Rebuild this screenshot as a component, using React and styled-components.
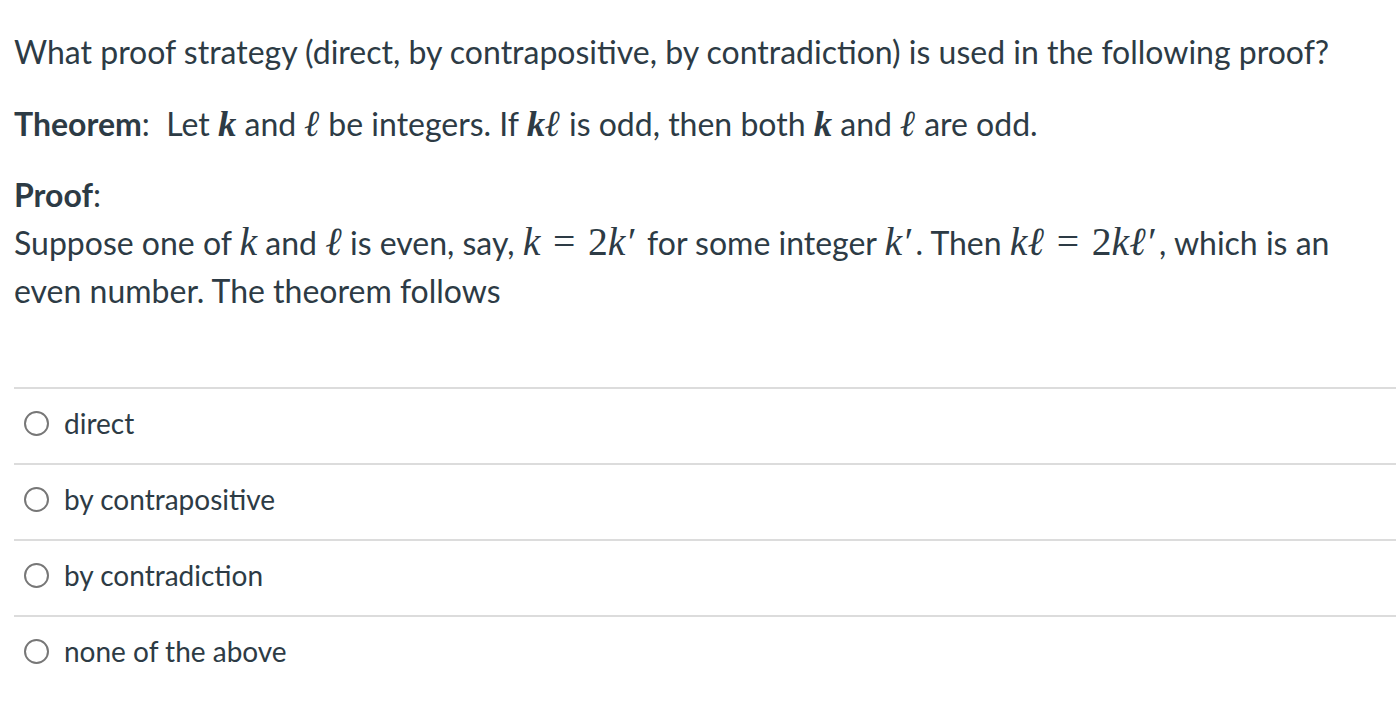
import React from "react";
import styled, { createGlobalStyle } from "styled-components";

const Global = createGlobalStyle`
  html, body { margin: 0; padding: 0; background: #fff; }
  body { font-family: Lato, "Open Sans", sans-serif; color: #2d3b45; }
`;

const Page = styled.div`
  padding: 28px 0 0 14px;
  font-size: 32px;
  line-height: 48px;
`;

const Para = styled.p`
  margin: 0 0 ${(p) => p.$gap || 0}px;
  max-width: 1350px;
`;

const Strong = styled.strong`
  font-weight: 700;
`;

const M = styled.span`
  font-family: "Liberation Serif", "DejaVu Serif", serif;
  font-style: ${(p) => (p.$up ? "normal" : "italic")};
  font-weight: ${(p) => (p.$bold ? 700 : 400)};
  font-size: ${(p) => p.$size || 1.15}em;
  line-height: 1;
  ${(p) => p.$op && `margin: 0 0.32em;`}
  ${(p) => p.$tail && `margin-right: 0.12em;`}
`;

const Answers = styled.div`
  margin-top: 72px;
  display: flex;
  flex-direction: column;
`;

const Row = styled.label`
  display: flex;
  align-items: center;
  gap: 15px;
  height: 68px;
  border-top: 2px solid #dcdcdc;
  padding-left: 10px;
  padding-bottom: 6px;
`;

const Radio = styled.span`
  width: 21px;
  height: 21px;
  border: 2px solid #777;
  border-radius: 50%;
  flex: none;
`;

const AnswerText = styled.span`
  font-size: 28px;
`;

const options = ["direct", "by contrapositive", "by contradiction", "none of the above"];

const P = 1.24;

export default function App() {
  return (
    <Page>
      <Global />
      <Para $gap={24}>
        What proof strategy (direct, by contrapositive, by contradiction) is used in the following proof?
      </Para>
      <Para $gap={23}>
        <Strong>Theorem</Strong>:&nbsp; Let <M $bold>k</M> and <M $bold>ℓ</M> be integers. If <M $bold>kℓ</M> is odd,
        then both <M $bold>k</M> and <M $bold>ℓ</M> are odd.
      </Para>
      <Para>
        <Strong>Proof</Strong>:
      </Para>
      <Para>
        Suppose one of <M $size={P}>k</M> and <M $size={P}>ℓ</M> is even, say, <M $size={P}>k</M>
        <M $size={P} $up $op>=</M>
        <M $size={P} $up>2</M>
        <M $size={P} $tail>k′</M> for some integer <M $size={P} $tail>k′</M>. Then <M $size={P}>kℓ</M>
        <M $size={P} $up $op>=</M>
        <M $size={P} $up>2</M>
        <M $size={P} $tail>kℓ′</M>, which is an even number. The theorem follows
      </Para>
      <Answers>
        {options.map((o) => (
          <Row key={o}>
            <Radio />
            <AnswerText>{o}</AnswerText>
          </Row>
        ))}
      </Answers>
    </Page>
  );
}
